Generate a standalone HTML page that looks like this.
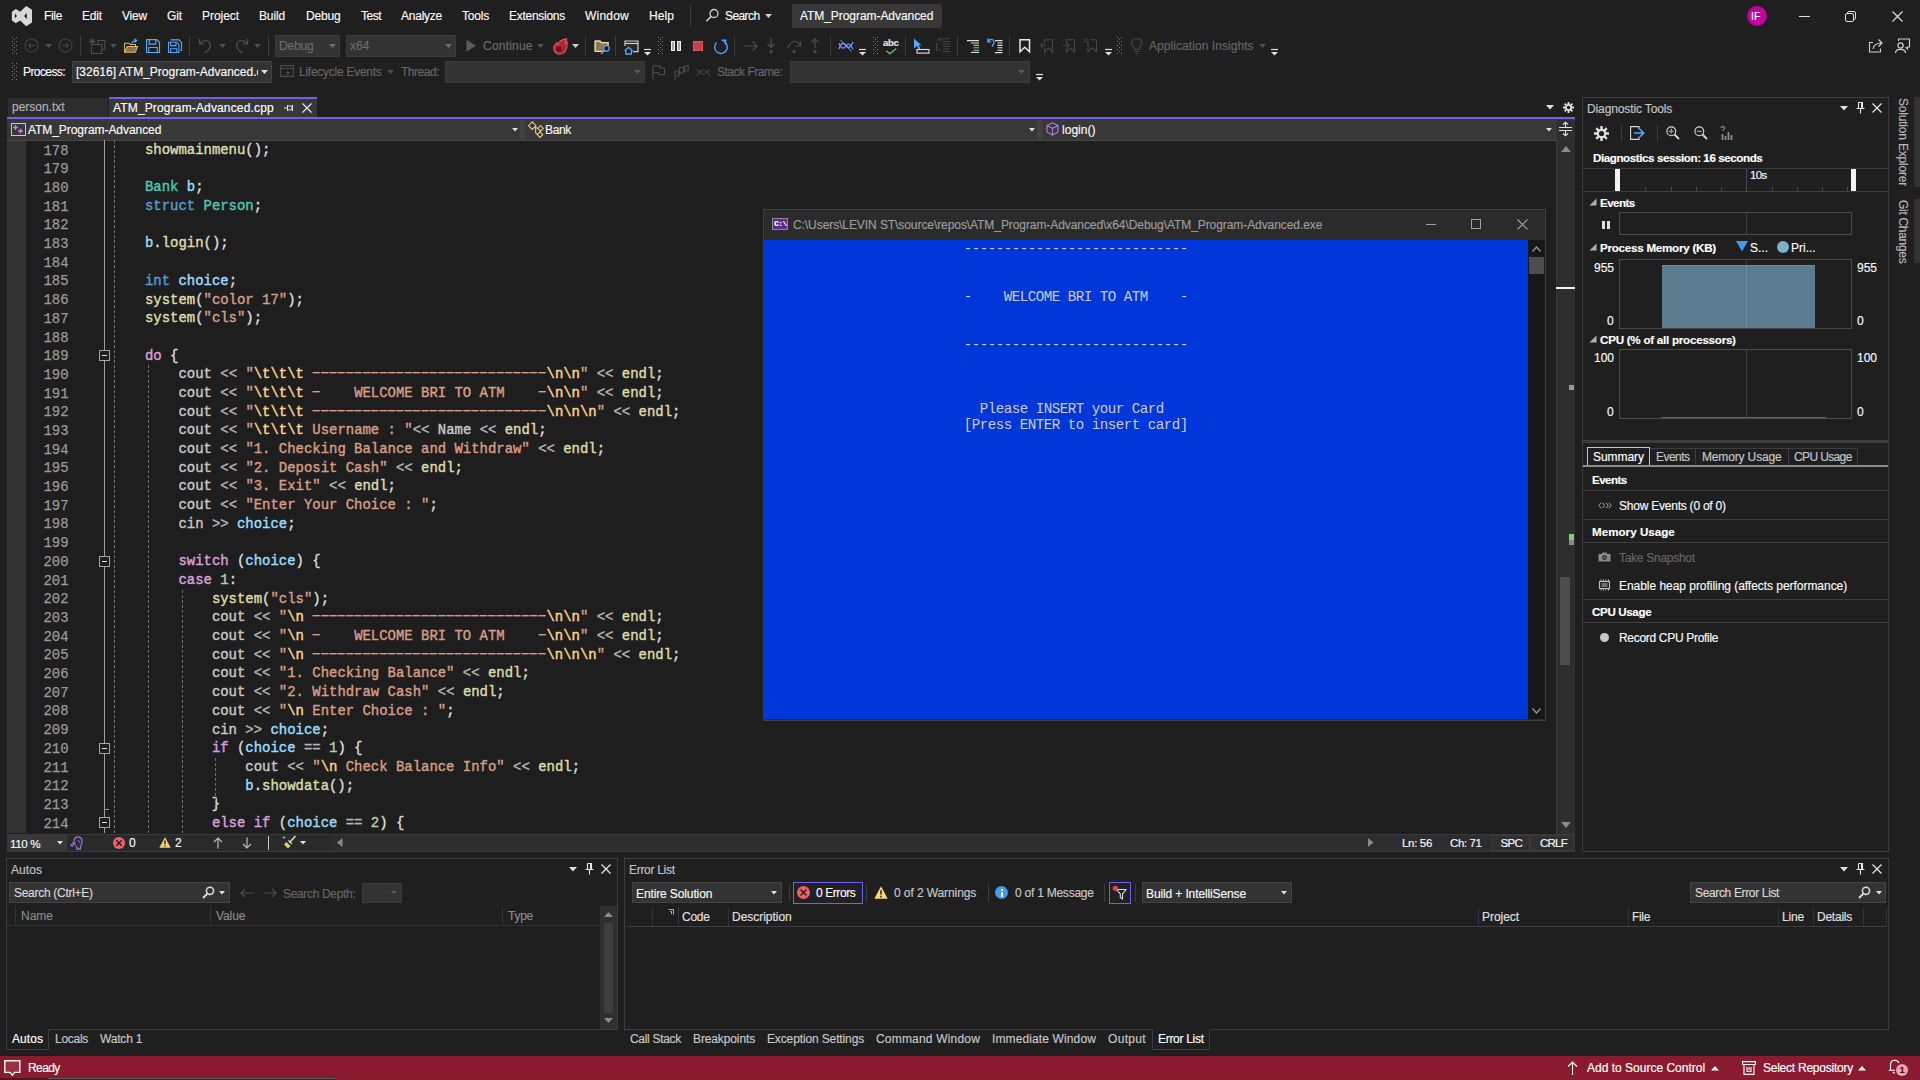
<!DOCTYPE html>
<html lang="en">
<head>
<meta charset="utf-8">
<title>ATM_Program-Advanced - Microsoft Visual Studio</title>
<style>
*{box-sizing:border-box;margin:0;padding:0}
html,body{width:1920px;height:1080px;overflow:hidden;background:#1f1f1f}
body{position:relative;font-family:"Liberation Sans",sans-serif;font-size:12px;color:#fafafa;-webkit-font-smoothing:antialiased}
.a{position:absolute;white-space:nowrap}
.t{position:absolute;white-space:nowrap;line-height:16px;height:16px}
.t{-webkit-text-stroke:0.15px}
.dim{color:#6d6d6d}
.mono{font-family:"Liberation Mono",monospace}
svg{position:absolute;overflow:visible}
/* code */
.ln{position:absolute;left:29px;width:39.5px;text-align:right;color:#9a9a9a;font-family:"Liberation Mono",monospace;font-size:13.95px;height:18.7px;line-height:18.7px;letter-spacing:0px}
.cl{position:absolute;left:111.5px;color:#dcdcdc;font-family:"Liberation Mono",monospace;font-size:13.95px;height:18.7px;line-height:18.7px;white-space:pre}
.d{display:inline-block;letter-spacing:-3.965px;transform:translate(-3.73px,-0.6px) scaleX(1.9);transform-origin:0 50%;-webkit-text-stroke:0.1px}
.cl{-webkit-text-stroke:0.4px}.ln{-webkit-text-stroke:0.25px}
.k{color:#569cd6}.c{color:#d8a0df}.ty{color:#4ec9b0}.v{color:#9cdcfe}.s{color:#d69d85}.e{color:#ffd68f}.f{color:#dcdcaa}.g{color:#c8c8c8}.o{color:#b4b4b4}.n{color:#b5cea8}
</style>
</head>
<body>
<!-- ===== title / menu bar ===== -->
<div class="a" id="menubar" style="left:0;top:0;width:1920px;height:32px;background:#1f1f1f"></div>
<svg style="left:11px;top:5px" width="22" height="22" viewBox="0 0 22 22"><path d="M0.85 6.85 L4.85 4 L9.1 6.7 L15.2 1.1 L21 4.8 V17.5 L15.2 21.2 L9.1 15.4 L4.85 18.3 L0.85 15.4 Z M3.85 8.6 L6 11.1 L3.85 13.2 Z M15.8 8 V14.3 L13.1 11.1 Z" fill="#d8d8d8" fill-rule="evenodd"/></svg>
<div class="t" style="left:44px;top:8px;letter-spacing:-0.34px">File</div>
<div class="t" style="left:82px;top:8px;letter-spacing:-0.22px">Edit</div>
<div class="t" style="left:122px;top:8px;letter-spacing:-0.20px">View</div>
<div class="t" style="left:167px;top:8px;letter-spacing:-0.18px">Git</div>
<div class="t" style="left:202px;top:8px;letter-spacing:-0.05px">Project</div>
<div class="t" style="left:259px;top:8px;letter-spacing:-0.14px">Build</div>
<div class="t" style="left:306px;top:8px;letter-spacing:-0.17px">Debug</div>
<div class="t" style="left:361px;top:8px;letter-spacing:-0.50px">Test</div>
<div class="t" style="left:401px;top:8px;letter-spacing:-0.24px">Analyze</div>
<div class="t" style="left:462px;top:8px;letter-spacing:-0.20px">Tools</div>
<div class="t" style="left:509px;top:8px;letter-spacing:-0.27px">Extensions</div>
<div class="t" style="left:585px;top:8px;letter-spacing:0.22px">Window</div>
<div class="t" style="left:649px;top:8px;letter-spacing:0.08px">Help</div>
<div class="a" style="left:690px;top:5px;width:1px;height:21px;background:#3d3d3d"></div>
<svg style="left:705px;top:8px" width="15" height="15" viewBox="0 0 15 15"><circle cx="9" cy="5.5" r="4" fill="none" stroke="#d0d0d0" stroke-width="1.3"/><path d="M6.2 8.4 L1.3 13.3" stroke="#d0d0d0" stroke-width="1.5"/></svg>
<div class="t" style="left:725px;top:8px;letter-spacing:-0.59px">Search</div>
<svg style="left:765px;top:14px" width="8" height="5" viewBox="0 0 8 5"><path d="M0 0 H7 L3.5 4 Z" fill="#d0d0d0"/></svg>
<div class="a" style="left:792px;top:4px;width:150px;height:24px;background:#383838;border-radius:2px"></div>
<div class="t" style="left:800px;top:8px;letter-spacing:-0.06px">ATM_Program-Advanced</div>
<div class="a" style="left:1747px;top:6px;width:20px;height:20px;border-radius:10px;background:#c3009f"></div>
<div class="t" style="left:1751px;top:8px;font-size:10.5px;color:#fff">IF</div>
<div class="a" style="left:1799px;top:16px;width:11px;height:1px;background:#e0e0e0"></div>
<svg style="left:1845px;top:11px" width="11" height="11" viewBox="0 0 11 11"><rect x="0.5" y="2.5" width="8" height="8" rx="1.5" fill="none" stroke="#e0e0e0"/><path d="M2.5 2.5 V2 Q2.5 0.5 4 0.5 H9 Q10.5 0.5 10.5 2 V7 Q10.5 8.5 9 8.5 H8.5" fill="none" stroke="#e0e0e0"/></svg>
<svg style="left:1892px;top:11px" width="11" height="11" viewBox="0 0 11 11"><path d="M0.5 0.5 L10.5 10.5 M10.5 0.5 L0.5 10.5" stroke="#e0e0e0" stroke-width="1.1"/></svg>
<!-- ===== toolbar row 1 ===== -->
<svg style="left:12px;top:37px" width="5" height="18" viewBox="0 0 5 18"><g fill="#808080"><rect x="0" y="0" width="1" height="1"/><rect x="4" y="0" width="1" height="1"/><rect x="2" y="2" width="1" height="1"/><rect x="0" y="4" width="1" height="1"/><rect x="4" y="4" width="1" height="1"/><rect x="2" y="6" width="1" height="1"/><rect x="0" y="8" width="1" height="1"/><rect x="4" y="8" width="1" height="1"/><rect x="2" y="10" width="1" height="1"/><rect x="0" y="12" width="1" height="1"/><rect x="4" y="12" width="1" height="1"/><rect x="2" y="14" width="1" height="1"/><rect x="0" y="16" width="1" height="1"/><rect x="4" y="16" width="1" height="1"/></g></svg>
<svg style="left:24px;top:38px" width="16" height="16" viewBox="0 0 16 16"><circle cx="7.5" cy="7.5" r="6.5" fill="none" stroke="#444444" stroke-width="1.1"/><path d="M11 7.5 H4.5 M7 5 L4.5 7.5 L7 10" fill="none" stroke="#444444" stroke-width="1.1"/></svg>
<svg style="left:45px;top:44px" width="8" height="5" viewBox="0 0 8 5"><path d="M0 0 H7 L3.5 4 Z" fill="#4f4f4f"/></svg>
<svg style="left:58px;top:38px" width="16" height="16" viewBox="0 0 16 16"><circle cx="7.5" cy="7.5" r="6.5" fill="none" stroke="#444444" stroke-width="1.1"/><path d="M4 7.5 H10.5 M8 5 L10.5 7.5 L8 10" fill="none" stroke="#444444" stroke-width="1.1"/></svg>
<div class="a" style="left:80px;top:36px;width:1px;height:20px;background:#3d3d3d"></div>
<svg style="left:88px;top:37px" width="18" height="18" viewBox="0 0 18 18"><path d="M10 7 V3.5 H16.8 V12.3 H14 M3.5 7.5 H13.8 V16.5 H3.5 Z" fill="none" stroke="#4d4d4d" stroke-width="1.1"/><path d="M4.3 1.2 V7.4 M1.2 4.3 H7.4 M2.1 2.1 L6.5 6.5 M6.5 2.1 L2.1 6.5" stroke="#5a5a5a" stroke-width="0.8"/></svg>
<svg style="left:110px;top:44px" width="8" height="5" viewBox="0 0 8 5"><path d="M0 0 H7 L3.5 4 Z" fill="#4f4f4f"/></svg>
<svg style="left:124px;top:38.6px" width="15.6" height="14.7" viewBox="0 0 17 16"><path d="M0.6 14.5 V4.5 H5.5 L7 6 H12.5 V8" fill="none" stroke="#dcb67a" stroke-width="1.1"/><path d="M0.8 14.5 L3.4 8.3 H14.8 L12.3 14.5 Z" fill="#dcb67a" fill-opacity=".55" stroke="#dcb67a" stroke-width="1.1"/><path d="M8.5 5 Q9 1.6 13.5 1.6 M11.5 -0.3 L13.8 1.7 L11.5 3.8" fill="none" stroke="#55aaff" stroke-width="1.3"/></svg>
<svg style="left:146.2px;top:39px" width="15" height="15" viewBox="0 0 16 16"><path d="M0.6 0.6 H11.5 L14.4 3.5 V14.4 H0.6 Z" fill="none" stroke="#55aaff" stroke-width="1.2"/><path d="M3.5 0.6 V5.5 H10.5 V0.6 M3 14.4 V9 H12 V14.4" fill="none" stroke="#55aaff" stroke-width="1.2"/></svg>
<svg style="left:168.2px;top:38.6px" width="15" height="15" viewBox="0 0 17 17"><path d="M0.6 3.6 H9.8 L12.4 6.2 V15.4 H0.6 Z" fill="none" stroke="#55aaff" stroke-width="1.2"/><path d="M3 3.6 V7.5 H9 V3.6 M3 15.4 V11 H10 V15.4" fill="none" stroke="#55aaff" stroke-width="1.2"/><path d="M3 1 H12.5 L15.4 4 V13 H14" fill="none" stroke="#55aaff" stroke-width="1.2"/></svg>
<div class="a" style="left:189px;top:36px;width:1px;height:20px;background:#3d3d3d"></div>
<svg style="left:198px;top:38px" width="16" height="16" viewBox="0 0 16 16"><path d="M1.5 1 V6 H6.5 M2 5.5 Q5 1.5 9.5 3 Q13.5 5 12 9.5 Q11 12 6.5 15" fill="none" stroke="#4f4f4f" stroke-width="1.2"/></svg>
<svg style="left:219px;top:44px" width="8" height="5" viewBox="0 0 8 5"><path d="M0 0 H7 L3.5 4 Z" fill="#4f4f4f"/></svg>
<svg style="left:233px;top:38px" width="16" height="16" viewBox="0 0 16 16"><path d="M14.5 1 V6 H9.5 M14 5.5 Q11 1.5 6.5 3 Q2.5 5 4 9.5 Q5 12 9.5 15" fill="none" stroke="#4f4f4f" stroke-width="1.2"/></svg>
<svg style="left:254px;top:44px" width="8" height="5" viewBox="0 0 8 5"><path d="M0 0 H7 L3.5 4 Z" fill="#4f4f4f"/></svg>
<div class="a" style="left:268px;top:36px;width:1px;height:20px;background:#3d3d3d"></div>
<div class="a" style="left:275px;top:35px;width:65px;height:22px;background:#333333;border:1px solid #3b3b3b"></div>
<div class="t dim" style="left:279px;top:38px;letter-spacing:-0.17px">Debug</div>
<svg style="left:329px;top:44px" width="8" height="5" viewBox="0 0 8 5"><path d="M0 0 H7 L3.5 4 Z" fill="#6d6d6d"/></svg>
<div class="a" style="left:346px;top:35px;width:110px;height:22px;background:#333333;border:1px solid #3b3b3b"></div>
<div class="t dim" style="left:350px;top:38px">x64</div>
<svg style="left:445px;top:44px" width="8" height="5" viewBox="0 0 8 5"><path d="M0 0 H7 L3.5 4 Z" fill="#6d6d6d"/></svg>
<svg style="left:466px;top:39px" width="11" height="14" viewBox="0 0 11 14"><path d="M0.5 0.8 L10 6.8 L0.5 12.8 Z" fill="#5a5a5a"/></svg>
<div class="t dim" style="left:483px;top:38px;letter-spacing:0.21px">Continue</div>
<svg style="left:537px;top:44px" width="8" height="5" viewBox="0 0 8 5"><path d="M0 0 H7 L3.5 4 Z" fill="#4f4f4f"/></svg>
<svg style="left:552.5px;top:37.5px" width="15" height="17" viewBox="0 0 15 17"><path d="M13.6 0.6 Q13.8 3.2 12 5 Q13.8 4.8 14.2 4.2 Q14.6 8 13.2 11.4 Q11.4 16.2 6.8 16.2 Q1.6 16 0.8 11.2 Q0.4 7 4.2 4.6 Q4.2 6 5.2 6.6 Q6.4 2 13.6 0.6 Z" fill="#a82a36" stroke="#e8525e" stroke-width="1.1"/><circle cx="6" cy="11" r="2.6" fill="#5c141d"/></svg>
<svg style="left:572px;top:44px" width="8" height="5" viewBox="0 0 8 5"><path d="M0 0 H7 L3.5 4 Z" fill="#d0d0d0"/></svg>
<div class="a" style="left:585px;top:36px;width:1px;height:20px;background:#3d3d3d"></div>
<svg style="left:593.5px;top:39.5px" width="17" height="16" viewBox="0 0 17 16"><path d="M1.2 11.4 V1.2 H6 L7.2 2.6 H14 V5.5 M1.2 11.4 H8.5" fill="#8a7a55" stroke="#f0d898" stroke-width="1.2"/><path d="M1.2 11.4 V1.2 H6 L7.2 2.6 H14 V11.4 Z" fill="#8a7a55" fill-opacity=".9" stroke="none"/><path d="M1.2 11.4 V1.2 H6 L7.2 2.6 H14 V5.5 M1.2 11.4 H8.5" fill="none" stroke="#f0d898" stroke-width="1.2"/><circle cx="12.4" cy="8.4" r="2.8" fill="#1f1f1f" stroke="#4da6ff" stroke-width="1.3"/><path d="M10.4 10.4 L7 14" stroke="#4da6ff" stroke-width="1.4"/></svg>
<div class="a" style="left:615px;top:36px;width:1px;height:20px;background:#3d3d3d"></div>
<svg style="left:623.5px;top:39.5px" width="16" height="16" viewBox="0 0 16 16"><path d="M1 6 V1 H14 V11.6 H9" fill="#2a2a2a" stroke="#d4d4d4" stroke-width="1.2"/><path d="M1 3.5 H14" stroke="#d4d4d4" stroke-width="1.2"/><path d="M0.6 10.8 L4.6 7.4 L8.6 10.8 M1.8 10 V14 H7.4 V10" fill="none" stroke="#4da6ff" stroke-width="1.3"/></svg>
<svg style="left:644px;top:49px" width="8" height="7" viewBox="0 0 8 7"><path d="M0 0.5 H7" stroke="#e0e0e0" stroke-width="1.2"/><path d="M0 3 H7 L3.5 6.5 Z" fill="#e0e0e0"/></svg>
<svg style="left:658px;top:37px" width="5" height="18" viewBox="0 0 5 18"><g fill="#808080"><rect x="0" y="0" width="1" height="1"/><rect x="4" y="0" width="1" height="1"/><rect x="2" y="2" width="1" height="1"/><rect x="0" y="4" width="1" height="1"/><rect x="4" y="4" width="1" height="1"/><rect x="2" y="6" width="1" height="1"/><rect x="0" y="8" width="1" height="1"/><rect x="4" y="8" width="1" height="1"/><rect x="2" y="10" width="1" height="1"/><rect x="0" y="12" width="1" height="1"/><rect x="4" y="12" width="1" height="1"/><rect x="2" y="14" width="1" height="1"/><rect x="0" y="16" width="1" height="1"/><rect x="4" y="16" width="1" height="1"/></g></svg>
<div class="a" style="left:670.9px;top:41px;width:3.9px;height:10px;background:#a8a8a8;border:0.8px solid #ececec"></div>
<div class="a" style="left:677.3px;top:41px;width:3.9px;height:10px;background:#a8a8a8;border:0.8px solid #ececec"></div>
<div class="a" style="left:693px;top:41px;width:10.2px;height:10px;background:#c93f4a;border:0.8px solid #e25560"></div>
<svg style="left:712.5px;top:38.5px" width="16" height="17" viewBox="0 0 16 17"><path d="M10.6 2.4 A6.3 6.3 0 1 1 3.6 3.6" fill="none" stroke="#4da6ff" stroke-width="1.4"/><path d="M8.6 1.2 H12.6 V5.4" fill="none" stroke="#4da6ff" stroke-width="1.4"/></svg>
<div class="a" style="left:734px;top:36px;width:1px;height:20px;background:#3d3d3d"></div>
<svg style="left:744px;top:40px" width="14" height="12" viewBox="0 0 14 12"><path d="M0 6 H13 M8.5 1.5 L13 6 L8.5 10.5" fill="none" stroke="#4f4f4f" stroke-width="1.2"/></svg>
<svg style="left:766px;top:38px" width="10" height="16" viewBox="0 0 10 16"><path d="M5 0 V9.5 M1.5 6 L5 9.5 L8.5 6" fill="none" stroke="#4f4f4f" stroke-width="1.2"/><circle cx="5" cy="13.5" r="1.6" fill="#4f4f4f"/></svg>
<svg style="left:787px;top:40px" width="15" height="14" viewBox="0 0 15 14"><path d="M1 8 Q3 1.5 8 1.5 Q11.5 1.5 13 5.5 M13.5 1 V6 H8.5" fill="none" stroke="#4f4f4f" stroke-width="1.2"/><circle cx="7" cy="11.5" r="1.6" fill="#4f4f4f"/></svg>
<svg style="left:810px;top:38px" width="10" height="16" viewBox="0 0 10 16"><path d="M5 10 V0.8 M1.5 4.3 L5 0.8 L8.5 4.3" fill="none" stroke="#4f4f4f" stroke-width="1.2"/><circle cx="5" cy="13.5" r="1.6" fill="#4f4f4f"/></svg>
<div class="a" style="left:830px;top:36px;width:1px;height:20px;background:#3d3d3d"></div>
<svg style="left:838px;top:38px" width="16" height="16" viewBox="0 0 16 16"><path d="M1 11 Q4 2 8 7.5 Q11.5 12.5 15 4" fill="none" stroke="#55aaff" stroke-width="1.3"/><path d="M1 5 Q4 13.5 8 8 Q11.5 3 15 11.5" fill="none" stroke="#a074e0" stroke-width="1.3"/><path d="M2.5 2 L13.5 13.5" stroke="#55aaff" stroke-width="1"/></svg>
<svg style="left:859px;top:49px" width="8" height="7" viewBox="0 0 8 7"><path d="M0 0.5 H7" stroke="#e0e0e0" stroke-width="1.2"/><path d="M0 3 H7 L3.5 6.5 Z" fill="#e0e0e0"/></svg>
<svg style="left:873px;top:37px" width="5" height="18" viewBox="0 0 5 18"><g fill="#808080"><rect x="0" y="0" width="1" height="1"/><rect x="4" y="0" width="1" height="1"/><rect x="2" y="2" width="1" height="1"/><rect x="0" y="4" width="1" height="1"/><rect x="4" y="4" width="1" height="1"/><rect x="2" y="6" width="1" height="1"/><rect x="0" y="8" width="1" height="1"/><rect x="4" y="8" width="1" height="1"/><rect x="2" y="10" width="1" height="1"/><rect x="0" y="12" width="1" height="1"/><rect x="4" y="12" width="1" height="1"/><rect x="2" y="14" width="1" height="1"/><rect x="0" y="16" width="1" height="1"/><rect x="4" y="16" width="1" height="1"/></g></svg>
<div class="t" style="left:883px;top:35px;font-size:9.5px;font-weight:bold;color:#e6e6e6;letter-spacing:-0.3px">abc</div>
<svg style="left:886px;top:48px" width="11" height="7" viewBox="0 0 11 7"><path d="M0.5 2.8 L3.8 5.8 L10.3 0.5" fill="none" stroke="#4fc266" stroke-width="1.4"/></svg>
<div class="a" style="left:905px;top:36px;width:1px;height:20px;background:#3d3d3d"></div>
<svg style="left:913px;top:38px" width="17" height="17" viewBox="0 0 17 17"><path d="M1 0.5 V10.5 L3.8 8 L6 11.5 L7.5 10.5 L5.5 7.3 H8.5 Z" fill="#55aaff"/><rect x="4" y="11.5" width="12" height="3.6" fill="none" stroke="#e0e0e0" stroke-width="1.1"/></svg>
<svg style="left:936px;top:38px" width="15" height="16" viewBox="0 0 15 16"><path d="M0.6 5 V12 H4.5 M3 2 V0.8 H14 M7 3.5 H14 M7 6 H14 M7 8.5 H14 M7 11 H14 M7 13.5 H14" fill="none" stroke="#444444" stroke-width="1.1"/><path d="M1.5 3 L3.3 1 L5 3" fill="none" stroke="#4b4b4b"/></svg>
<div class="a" style="left:957px;top:36px;width:1px;height:20px;background:#3d3d3d"></div>
<svg style="left:967px;top:40px" width="13" height="13" viewBox="0 0 13 13"><path d="M0 0.6 H12 M4 3 H12" stroke="#e0e0e0" stroke-width="1.1"/><path d="M6.5 5.4 H12 M6.5 7.8 H12 M6.5 10.2 H12" stroke="#6ad27a" stroke-width="1.1"/><path d="M4 12.4 H12" stroke="#e0e0e0" stroke-width="1.1"/></svg>
<svg style="left:987px;top:38px" width="16" height="15" viewBox="0 0 16 15"><path d="M8 2.6 H15.5 M10.5 5 H15.5 M10.5 7.4 H15.5 M10.5 9.8 H15.5 M10.5 12.2 H15.5 M8 14.6 H15.5" stroke="#e0e0e0" stroke-width="1.1"/><path d="M0.8 0.3 V4 H4.3 M1 3.6 Q3.5 0 6.3 2.2 Q8.3 4.5 5 8.5" fill="none" stroke="#55aaff" stroke-width="1.2"/></svg>
<div class="a" style="left:1009px;top:36px;width:1px;height:20px;background:#3d3d3d"></div>
<svg style="left:1019px;top:39px" width="12" height="14" viewBox="0 0 12 14"><path d="M1 0.8 H10.5 V12.8 L5.75 8.3 L1 12.8 Z" fill="none" stroke="#eaeaea" stroke-width="1.5"/></svg>
<svg style="left:1040px;top:39px" width="14" height="14" viewBox="0 0 14 14"><path d="M4.5 0.8 H12.5 V12.8 L8.5 8.8 L4.5 12.8 V8.5 M4.5 4 V0.8 M6.5 6.3 H0.8 M3 4 L0.8 6.3 L3 8.6" fill="none" stroke="#474747" stroke-width="1.1"/></svg>
<svg style="left:1062px;top:39px" width="14" height="14" viewBox="0 0 14 14"><path d="M4.5 0.8 H12.5 V12.8 L8.5 8.8 L4.5 12.8 V8.5 M4.5 4 V0.8 M0.5 6.3 H7 M4.8 4 L7 6.3 L4.8 8.6" fill="none" stroke="#474747" stroke-width="1.1"/></svg>
<svg style="left:1083px;top:38px" width="15" height="15" viewBox="0 0 15 15"><path d="M5 3 V13.8 L9.3 9.8 L13.5 13.8 V1.8 H7" fill="none" stroke="#474747" stroke-width="1.1"/><path d="M0.5 0.5 L4.5 4.5 M4.5 0.5 L0.5 4.5" stroke="#474747" stroke-width="1"/></svg>
<svg style="left:1105px;top:49px" width="8" height="7" viewBox="0 0 8 7"><path d="M0 0.5 H7" stroke="#e0e0e0" stroke-width="1.2"/><path d="M0 3 H7 L3.5 6.5 Z" fill="#e0e0e0"/></svg>
<svg style="left:1117px;top:37px" width="5" height="18" viewBox="0 0 5 18"><g fill="#808080"><rect x="0" y="0" width="1" height="1"/><rect x="4" y="0" width="1" height="1"/><rect x="2" y="2" width="1" height="1"/><rect x="0" y="4" width="1" height="1"/><rect x="4" y="4" width="1" height="1"/><rect x="2" y="6" width="1" height="1"/><rect x="0" y="8" width="1" height="1"/><rect x="4" y="8" width="1" height="1"/><rect x="2" y="10" width="1" height="1"/><rect x="0" y="12" width="1" height="1"/><rect x="4" y="12" width="1" height="1"/><rect x="2" y="14" width="1" height="1"/><rect x="0" y="16" width="1" height="1"/><rect x="4" y="16" width="1" height="1"/></g></svg>
<svg style="left:1131px;top:38px" width="12" height="17" viewBox="0 0 12 17"><path d="M3.5 11.5 Q3.5 9.5 2 8 Q0.6 6.5 0.6 5.2 Q0.8 0.7 5.8 0.7 Q10.8 0.7 11 5.2 Q11 6.5 9.6 8 Q8 9.5 8 11.5 Z M3.8 13.5 H7.8 M4.3 15.5 H7.3" fill="none" stroke="#464646" stroke-width="1.1"/></svg>
<div class="t dim" style="left:1149px;top:38px;color:#666;letter-spacing:0.06px">Application Insights</div>
<svg style="left:1259px;top:44px" width="8" height="5" viewBox="0 0 8 5"><path d="M0 0 H7 L3.5 4 Z" fill="#4f4f4f"/></svg>
<svg style="left:1271px;top:49px" width="8" height="7" viewBox="0 0 8 7"><path d="M0 0.5 H7" stroke="#e0e0e0" stroke-width="1.2"/><path d="M0 3 H7 L3.5 6.5 Z" fill="#e0e0e0"/></svg>
<svg style="left:1868px;top:38px" width="16" height="16" viewBox="0 0 16 16"><path d="M5 4.5 H1.5 V14 H12.5 V10.5" fill="none" stroke="#d0d0d0" stroke-width="1.1"/><path d="M5 11 Q6 5 13.5 5 M10.5 1.5 L14 5 L10.5 8.5" fill="none" stroke="#d0d0d0" stroke-width="1.2"/></svg>
<svg style="left:1894px;top:38px" width="17" height="16" viewBox="0 0 17 16"><path d="M4.5 3 V1 H15.5 V9 H13.5 V11 L11.5 9.2" fill="none" stroke="#d0d0d0" stroke-width="1.1"/><circle cx="6.5" cy="7.5" r="2.6" fill="none" stroke="#d0d0d0" stroke-width="1.2"/><path d="M1.5 15 Q1.5 11.3 6.5 11.3 Q11.5 11.3 11.5 15" fill="none" stroke="#d0d0d0" stroke-width="1.2"/></svg>
<!-- ===== toolbar row 2 ===== -->
<svg style="left:12px;top:63px" width="5" height="18" viewBox="0 0 5 18"><g fill="#808080"><rect x="0" y="0" width="1" height="1"/><rect x="4" y="0" width="1" height="1"/><rect x="2" y="2" width="1" height="1"/><rect x="0" y="4" width="1" height="1"/><rect x="4" y="4" width="1" height="1"/><rect x="2" y="6" width="1" height="1"/><rect x="0" y="8" width="1" height="1"/><rect x="4" y="8" width="1" height="1"/><rect x="2" y="10" width="1" height="1"/><rect x="0" y="12" width="1" height="1"/><rect x="4" y="12" width="1" height="1"/><rect x="2" y="14" width="1" height="1"/><rect x="0" y="16" width="1" height="1"/><rect x="4" y="16" width="1" height="1"/></g></svg>
<div class="t" style="left:23px;top:64px;letter-spacing:-0.59px">Process:</div>
<div class="a" style="left:72px;top:61px;width:200px;height:22px;background:#333333;border:1px solid #434343"></div>
<div class="t" style="left:76px;top:64px;width:182px;overflow:hidden">[32616] ATM_Program-Advanced.exe</div>
<svg style="left:261px;top:70px" width="8" height="5" viewBox="0 0 8 5"><path d="M0 0 H7 L3.5 4 Z" fill="#e0e0e0"/></svg>
<svg style="left:280px;top:65px" width="14" height="14" viewBox="0 0 14 14"><path d="M0.6 0.6 H13.4 V11.4 H0.6 Z M0.6 3.5 H13.4" fill="none" stroke="#4b4b4b" stroke-width="1.1"/><path d="M8.5 4.5 L5.5 8.3 H8 L6 12 L10.3 7 H7.8 Z" fill="#4b4b4b"/></svg>
<div class="t dim" style="left:299px;top:64px;color:#666;letter-spacing:-0.26px">Lifecycle Events</div>
<svg style="left:387px;top:70px" width="8" height="5" viewBox="0 0 8 5"><path d="M0 0 H7 L3.5 4 Z" fill="#4f4f4f"/></svg>
<div class="t dim" style="left:401px;top:64px;color:#666;letter-spacing:-0.48px">Thread:</div>
<div class="a" style="left:445px;top:61px;width:200px;height:22px;background:#333333;border:1px solid #3b3b3b"></div>
<svg style="left:634px;top:70px" width="8" height="5" viewBox="0 0 8 5"><path d="M0 0 H7 L3.5 4 Z" fill="#5a5a5a"/></svg>
<svg style="left:652px;top:65px" width="14" height="15" viewBox="0 0 14 15"><path d="M1 14.5 V0.8 H8 V3 H12.5 V9.5 H6.5 V7.5 H1" fill="none" stroke="#4b4b4b" stroke-width="1.2"/></svg>
<svg style="left:674px;top:65px" width="15" height="16" viewBox="0 0 15 16"><path d="M1 15.5 V6 H5 V11 H1 M5.5 10 V2.5 H9.5 V8 H6 M10.5 7 V0.8 H14.2 V6 H10.5" fill="none" stroke="#4b4b4b" stroke-width="1.2"/></svg>
<svg style="left:696px;top:67px" width="15" height="11" viewBox="0 0 15 11"><path d="M1 9 Q7.5 -3 14 9 M1 2 Q7.5 12 14 2" fill="none" stroke="#454545" stroke-width="1.1"/></svg>
<div class="t dim" style="left:717px;top:64px;color:#666;letter-spacing:-0.49px">Stack Frame:</div>
<div class="a" style="left:790px;top:61px;width:240px;height:22px;background:#333333;border:1px solid #3b3b3b"></div>
<svg style="left:1018px;top:70px" width="8" height="5" viewBox="0 0 8 5"><path d="M0 0 H7 L3.5 4 Z" fill="#5a5a5a"/></svg>
<svg style="left:1036px;top:74px" width="8" height="7" viewBox="0 0 8 7"><path d="M0 0.5 H7" stroke="#e0e0e0" stroke-width="1.2"/><path d="M0 3 H7 L3.5 6.5 Z" fill="#e0e0e0"/></svg>
<!-- ===== document tabs + nav bar ===== -->
<div class="a" style="left:8px;top:98px;width:100px;height:20px;background:#2d2d2d"></div>
<div class="t" style="left:12px;top:99px;color:#b4b4b4;letter-spacing:-0.02px">person.txt</div>
<div class="a" style="left:109px;top:97px;width:208px;height:22px;background:#383838;border-top:2px solid #7160e8"></div>
<div class="t" style="left:113px;top:100px;color:#fff;letter-spacing:0.15px">ATM_Program-Advanced.cpp</div>
<svg style="left:284px;top:104px" width="9" height="8" viewBox="0 0 9 8"><path d="M0 4 H3.5 M3.5 1 V7 M3.5 2 H8 V5.8 H3.5 M8.5 1 V7" fill="none" stroke="#e0e0e0" stroke-width="1"/></svg>
<svg style="left:302px;top:103px" width="10" height="10" viewBox="0 0 10 10"><path d="M0.5 0.5 L9.5 9.5 M9.5 0.5 L0.5 9.5" stroke="#e6e6e6" stroke-width="1.2"/></svg>
<div class="a" style="left:7px;top:117px;width:1568px;height:2px;background:#7160e8"></div>
<svg style="left:1546px;top:105px" width="8" height="5" viewBox="0 0 8 5"><path d="M0 0 H8 L4 4.5 Z" fill="#e0e0e0"/></svg>
<svg style="left:1563px;top:102px" width="11" height="11" viewBox="0 0 11 11"><circle cx="5.5" cy="5.5" r="2.7" fill="none" stroke="#e0e0e0" stroke-width="1.8"/><path d="M5.5 0 V2.2 M5.5 8.8 V11 M0 5.5 H2.2 M8.8 5.5 H11 M1.6 1.6 L3.1 3.1 M7.9 7.9 L9.4 9.4 M9.4 1.6 L7.9 3.1 M3.1 7.9 L1.6 9.4" stroke="#e0e0e0" stroke-width="1.9"/></svg>
<!-- nav bar -->
<div class="a" style="left:7px;top:119px;width:1568px;height:22px;background:#383838"></div>
<div class="a" style="left:520px;top:120px;width:5px;height:20px;background:#424242"></div>
<div class="a" style="left:1037px;top:120px;width:5px;height:20px;background:#424242"></div><div class="a" style="left:7px;top:140px;width:1568px;height:1px;background:#484848"></div>
<div class="a" style="left:1557px;top:120px;width:18px;height:21px;background:#2e2e2e"></div>
<svg style="left:11px;top:123px" width="15" height="13" viewBox="0 0 15 13"><rect x="0.5" y="0.5" width="14" height="12" fill="none" stroke="#c8c8c8"/><path d="M4.5 2 V7 M2 4.5 H7 M9.5 5.5 V10.5 M7 8 H12" stroke="#c586e8" stroke-width="1.3"/></svg>
<div class="t" style="left:28px;top:122px;letter-spacing:-0.06px">ATM_Program-Advanced</div>
<svg style="left:512px;top:128px" width="7" height="4" viewBox="0 0 7 4"><path d="M0 0 H6 L3 3.5 Z" fill="#e0e0e0"/></svg>
<svg style="left:527px;top:121px" width="18" height="18" viewBox="0 0 18 18"><path d="M5.3 0.9 L9.1 4.7 L5.3 8.5 L1.5 4.7 Z M13.6 4.6 L16.4 7.4 L13.6 10.2 L10.8 7.4 Z M13 10.8 L15.8 13.6 L13 16.4 L10.2 13.6 Z" fill="none" stroke="#e8c97f" stroke-width="1.1"/><path d="M8 6 L11 7.4 M8.6 6.4 V12 L10.4 13.4" fill="none" stroke="#e8c97f" stroke-width="1.1"/></svg>
<div class="t" style="left:545px;top:122px;letter-spacing:-0.34px">Bank</div>
<svg style="left:1029px;top:128px" width="7" height="4" viewBox="0 0 7 4"><path d="M0 0 H6 L3 3.5 Z" fill="#e0e0e0"/></svg>
<svg style="left:1046px;top:122px" width="13" height="14" viewBox="0 0 13 14"><path d="M6.5 0.8 L12 3.5 V10 L6.5 13 L1 10 V3.5 Z M1 3.5 L6.5 6.3 L12 3.5 M6.5 6.3 V13" fill="none" stroke="#b180d7" stroke-width="1.1"/></svg>
<div class="t" style="left:1062px;top:122px;letter-spacing:0.02px">login()</div>
<svg style="left:1546px;top:128px" width="7" height="4" viewBox="0 0 7 4"><path d="M0 0 H6 L3 3.5 Z" fill="#e0e0e0"/></svg>
<svg style="left:1559px;top:122px" width="13" height="14" viewBox="0 0 13 14"><path d="M0 5.5 H13 M0 8.5 H13 M6.5 0 V5 M6.5 9 V14 M4 2.5 L6.5 0.3 L9 2.5 M4 11.5 L6.5 13.7 L9 11.5" fill="none" stroke="#e0e0e0" stroke-width="1.1"/></svg>
<!-- ===== code editor ===== -->
<div class="a" id="editor" style="left:7px;top:141px;width:1550px;height:692px;background:#1e1e1e;overflow:hidden"></div>
<div class="a" style="left:6.5px;top:141px;width:19px;height:692px;background:#333333"></div>
<div class="ln" style="top:141.60px">178</div><div class="cl" style="top:141.00px">    <span class="f">showmainmenu</span>();</div>
<div class="ln" style="top:160.29px">179</div><div class="cl" style="top:159.69px"></div>
<div class="ln" style="top:178.99px">180</div><div class="cl" style="top:178.39px">    <span class="ty">Bank</span> <span class="v">b</span>;</div>
<div class="ln" style="top:197.68px">181</div><div class="cl" style="top:197.08px">    <span class="k">struct</span> <span class="ty">Person</span>;</div>
<div class="ln" style="top:216.38px">182</div><div class="cl" style="top:215.78px"></div>
<div class="ln" style="top:235.07px">183</div><div class="cl" style="top:234.47px">    <span class="v">b</span>.<span class="f">login</span>();</div>
<div class="ln" style="top:253.76px">184</div><div class="cl" style="top:253.16px"></div>
<div class="ln" style="top:272.46px">185</div><div class="cl" style="top:271.86px">    <span class="k">int</span> <span class="v">choice</span>;</div>
<div class="ln" style="top:291.15px">186</div><div class="cl" style="top:290.55px">    <span class="f">system</span>(<span class="s">"color 17"</span>);</div>
<div class="ln" style="top:309.85px">187</div><div class="cl" style="top:309.25px">    <span class="f">system</span>(<span class="s">"cls"</span>);</div>
<div class="ln" style="top:328.54px">188</div><div class="cl" style="top:327.94px"></div>
<div class="ln" style="top:347.23px">189</div><div class="cl" style="top:346.63px">    <span class="c">do</span> {</div>
<div class="ln" style="top:365.93px">190</div><div class="cl" style="top:365.33px">        <span class="g">cout</span> <span class="o">&lt;&lt;</span> <span class="s">"</span><span class="e">\t</span><span class="e">\t</span><span class="e">\t</span><span class="s"> <span class="d" style="margin-right:111.02px">----------------------------</span></span><span class="e">\n</span><span class="e">\n</span><span class="s">"</span> <span class="o">&lt;&lt;</span> <span class="f">endl</span>;</div>
<div class="ln" style="top:384.62px">191</div><div class="cl" style="top:384.02px">        <span class="g">cout</span> <span class="o">&lt;&lt;</span> <span class="s">"</span><span class="e">\t</span><span class="e">\t</span><span class="e">\t</span><span class="s"> <span class="d" style="margin-right:3.96px">-</span>    WELCOME BRI TO ATM    <span class="d" style="margin-right:3.96px">-</span></span><span class="e">\n</span><span class="e">\n</span><span class="s">"</span> <span class="o">&lt;&lt;</span> <span class="f">endl</span>;</div>
<div class="ln" style="top:403.32px">192</div><div class="cl" style="top:402.72px">        <span class="g">cout</span> <span class="o">&lt;&lt;</span> <span class="s">"</span><span class="e">\t</span><span class="e">\t</span><span class="e">\t</span><span class="s"> <span class="d" style="margin-right:111.02px">----------------------------</span></span><span class="e">\n</span><span class="e">\n</span><span class="e">\n</span><span class="s">"</span> <span class="o">&lt;&lt;</span> <span class="f">endl</span>;</div>
<div class="ln" style="top:422.01px">193</div><div class="cl" style="top:421.41px">        <span class="g">cout</span> <span class="o">&lt;&lt;</span> <span class="s">"</span><span class="e">\t</span><span class="e">\t</span><span class="e">\t</span><span class="s"> Username : "</span><span class="o">&lt;&lt;</span> <span class="g">Name</span> <span class="o">&lt;&lt;</span> <span class="f">endl</span>;</div>
<div class="ln" style="top:440.70px">194</div><div class="cl" style="top:440.10px">        <span class="g">cout</span> <span class="o">&lt;&lt;</span> <span class="s">"1. Checking Balance and Withdraw"</span> <span class="o">&lt;&lt;</span> <span class="f">endl</span>;</div>
<div class="ln" style="top:459.40px">195</div><div class="cl" style="top:458.80px">        <span class="g">cout</span> <span class="o">&lt;&lt;</span> <span class="s">"2. Deposit Cash"</span> <span class="o">&lt;&lt;</span> <span class="f">endl</span>;</div>
<div class="ln" style="top:478.09px">196</div><div class="cl" style="top:477.49px">        <span class="g">cout</span> <span class="o">&lt;&lt;</span> <span class="s">"3. Exit"</span> <span class="o">&lt;&lt;</span> <span class="f">endl</span>;</div>
<div class="ln" style="top:496.79px">197</div><div class="cl" style="top:496.19px">        <span class="g">cout</span> <span class="o">&lt;&lt;</span> <span class="s">"Enter Your Choice : "</span>;</div>
<div class="ln" style="top:515.48px">198</div><div class="cl" style="top:514.88px">        <span class="g">cin</span> <span class="o">&gt;&gt;</span> <span class="v">choice</span>;</div>
<div class="ln" style="top:534.17px">199</div><div class="cl" style="top:533.57px"></div>
<div class="ln" style="top:552.87px">200</div><div class="cl" style="top:552.27px">        <span class="c">switch</span> (<span class="v">choice</span>) {</div>
<div class="ln" style="top:571.56px">201</div><div class="cl" style="top:570.96px">        <span class="c">case</span> <span class="n">1</span>:</div>
<div class="ln" style="top:590.26px">202</div><div class="cl" style="top:589.66px">            <span class="f">system</span>(<span class="s">"cls"</span>);</div>
<div class="ln" style="top:608.95px">203</div><div class="cl" style="top:608.35px">            <span class="g">cout</span> <span class="o">&lt;&lt;</span> <span class="s">"</span><span class="e">\n</span><span class="s"> <span class="d" style="margin-right:111.02px">----------------------------</span></span><span class="e">\n</span><span class="e">\n</span><span class="s">"</span> <span class="o">&lt;&lt;</span> <span class="f">endl</span>;</div>
<div class="ln" style="top:627.64px">204</div><div class="cl" style="top:627.04px">            <span class="g">cout</span> <span class="o">&lt;&lt;</span> <span class="s">"</span><span class="e">\n</span><span class="s"> <span class="d" style="margin-right:3.96px">-</span>    WELCOME BRI TO ATM    <span class="d" style="margin-right:3.96px">-</span></span><span class="e">\n</span><span class="e">\n</span><span class="s">"</span> <span class="o">&lt;&lt;</span> <span class="f">endl</span>;</div>
<div class="ln" style="top:646.34px">205</div><div class="cl" style="top:645.74px">            <span class="g">cout</span> <span class="o">&lt;&lt;</span> <span class="s">"</span><span class="e">\n</span><span class="s"> <span class="d" style="margin-right:111.02px">----------------------------</span></span><span class="e">\n</span><span class="e">\n</span><span class="e">\n</span><span class="s">"</span> <span class="o">&lt;&lt;</span> <span class="f">endl</span>;</div>
<div class="ln" style="top:665.03px">206</div><div class="cl" style="top:664.43px">            <span class="g">cout</span> <span class="o">&lt;&lt;</span> <span class="s">"1. Checking Balance"</span> <span class="o">&lt;&lt;</span> <span class="f">endl</span>;</div>
<div class="ln" style="top:683.73px">207</div><div class="cl" style="top:683.13px">            <span class="g">cout</span> <span class="o">&lt;&lt;</span> <span class="s">"2. Withdraw Cash"</span> <span class="o">&lt;&lt;</span> <span class="f">endl</span>;</div>
<div class="ln" style="top:702.42px">208</div><div class="cl" style="top:701.82px">            <span class="g">cout</span> <span class="o">&lt;&lt;</span> <span class="s">"</span><span class="e">\n</span><span class="s"> Enter Choice : "</span>;</div>
<div class="ln" style="top:721.11px">209</div><div class="cl" style="top:720.51px">            <span class="g">cin</span> <span class="o">&gt;&gt;</span> <span class="v">choice</span>;</div>
<div class="ln" style="top:739.81px">210</div><div class="cl" style="top:739.21px">            <span class="c">if</span> (<span class="v">choice</span> <span class="o">==</span> <span class="n">1</span>) {</div>
<div class="ln" style="top:758.50px">211</div><div class="cl" style="top:757.90px">                <span class="g">cout</span> <span class="o">&lt;&lt;</span> <span class="s">"</span><span class="e">\n</span><span class="s"> Check Balance Info"</span> <span class="o">&lt;&lt;</span> <span class="f">endl</span>;</div>
<div class="ln" style="top:777.20px">212</div><div class="cl" style="top:776.60px">                <span class="v">b</span>.<span class="f">showdata</span>();</div>
<div class="ln" style="top:795.89px">213</div><div class="cl" style="top:795.29px">            }</div>
<div class="ln" style="top:814.58px">214</div><div class="cl" style="top:813.98px">            <span class="c">else</span> <span class="c">if</span> (<span class="v">choice</span> <span class="o">==</span> <span class="n">2</span>) {</div>
<div class="a" style="left:104px;top:140px;width:1px;height:693px;background:#9e9e9e"></div>
<div class="a" style="left:99px;top:350.0px;width:11px;height:11px;background:#1e1e1e;border:1px solid #a5a5a5"></div><div class="a" style="left:102px;top:355.0px;width:5px;height:1px;background:#e0e0e0"></div>
<div class="a" style="left:99px;top:555.6px;width:11px;height:11px;background:#1e1e1e;border:1px solid #a5a5a5"></div><div class="a" style="left:102px;top:560.6px;width:5px;height:1px;background:#e0e0e0"></div>
<div class="a" style="left:99px;top:742.6px;width:11px;height:11px;background:#1e1e1e;border:1px solid #a5a5a5"></div><div class="a" style="left:102px;top:747.6px;width:5px;height:1px;background:#e0e0e0"></div>
<div class="a" style="left:99px;top:817.3px;width:11px;height:11px;background:#1e1e1e;border:1px solid #a5a5a5"></div><div class="a" style="left:102px;top:822.3px;width:5px;height:1px;background:#e0e0e0"></div>
<div class="a" style="left:104px;top:809.0px;width:5px;height:1px;background:#9e9e9e"></div>
<div class="a" style="left:114.0px;top:140.0px;width:1px;height:693.0px;background:repeating-linear-gradient(to bottom,#6e6e6e 0,#6e6e6e 3px,transparent 3px,transparent 5px)"></div>
<div class="a" style="left:148.0px;top:365.3px;width:1px;height:467.7px;background:repeating-linear-gradient(to bottom,#6e6e6e 0,#6e6e6e 3px,transparent 3px,transparent 5px)"></div>
<div class="a" style="left:181.5px;top:589.7px;width:1px;height:243.3px;background:repeating-linear-gradient(to bottom,#6e6e6e 0,#6e6e6e 3px,transparent 3px,transparent 5px)"></div>
<div class="a" style="left:215.0px;top:757.9px;width:1px;height:47.4px;background:repeating-linear-gradient(to bottom,#6e6e6e 0,#6e6e6e 3px,transparent 3px,transparent 5px)"></div>
<!-- ===== editor scrollbar + bottom strip ===== -->
<div class="a" style="left:1556px;top:141px;width:19px;height:693px;background:#2e2e2e;border-left:1px solid #3a3a3a"></div>
<svg style="left:1561px;top:146px" width="10" height="6" viewBox="0 0 10 6"><path d="M0 6 H10 L5 0 Z" fill="#8a8a8a"/></svg>
<svg style="left:1561px;top:822px" width="10" height="6" viewBox="0 0 10 6"><path d="M0 0 H10 L5 6 Z" fill="#8a8a8a"/></svg>
<div class="a" style="left:1556px;top:287px;width:19px;height:2px;background:#f0f0f0"></div>
<div class="a" style="left:1569px;top:385px;width:5px;height:5px;background:#9a9a9a"></div>
<div class="a" style="left:1569px;top:534px;width:5px;height:6px;background:#7bd36b"></div>
<div class="a" style="left:1569px;top:540px;width:5px;height:5px;background:#8a8a8a"></div>
<div class="a" style="left:1560px;top:577px;width:10px;height:88px;background:#4d4d4d"></div>
<!-- bottom strip -->
<div class="a" style="left:7px;top:834px;width:1568px;height:18px;background:#2d2d2d;border-top:1px solid #3a3a3a;border-bottom:1px solid #3d3d3d"></div>
<div class="a" style="left:7px;top:835px;width:325px;height:16px;background:#2a2a2a"></div>
<div class="a" style="left:7px;top:835px;width:60px;height:16px;background:#383838"></div>
<div class="t" style="left:10px;top:835.5px;font-size:11.6px;letter-spacing:-0.35px">110 %</div>
<svg style="left:57px;top:841px" width="7" height="4" viewBox="0 0 7 4"><path d="M0 0 H6 L3 3.5 Z" fill="#e0e0e0"/></svg>
<svg style="left:70px;top:836px" width="13" height="14" viewBox="0 0 13 14"><path d="M4 5.5 Q4 1 8 1 Q12 1 12 5.5 Q12 8.5 10.5 10 V13 H7 V11" fill="none" stroke="#9b6fd8" stroke-width="1.3"/><path d="M7.5 4 Q9.5 4.5 9.5 6.5 M5.5 7 L2 10.5 Q0.5 9.5 1 8 L2.5 9 L3.5 8 L2.5 6.5 Q4 6 5.5 7 Z M5 8.5 L8 12.5" fill="#9b6fd8" stroke="#9b6fd8" stroke-width="0.9"/></svg>
<div class="a" style="left:113px;top:837px;width:12px;height:12px;border-radius:6px;background:#f0616d"></div>
<svg style="left:116px;top:840px" width="6" height="6" viewBox="0 0 6 6"><path d="M0.3 0.3 L5.7 5.7 M5.7 0.3 L0.3 5.7" stroke="#1f1f1f" stroke-width="1.4"/></svg>
<div class="t" style="left:129px;top:835px">0</div>
<svg style="left:159px;top:837px" width="12" height="11" viewBox="0 0 12 11"><path d="M6 0.3 L11.7 10.7 H0.3 Z" fill="#f5d67a"/><path d="M6 3.5 V7.2 M6 8.3 V9.6" stroke="#1f1f1f" stroke-width="1.4"/></svg>
<div class="t" style="left:175px;top:835px">2</div>
<svg style="left:213px;top:837px" width="10" height="12" viewBox="0 0 10 12"><path d="M5 11.5 V1 M1 5 L5 1 L9 5" fill="none" stroke="#bdbdbd" stroke-width="1.2"/></svg>
<svg style="left:242px;top:837px" width="10" height="12" viewBox="0 0 10 12"><path d="M5 0.5 V11 M1 7 L5 11 L9 7" fill="none" stroke="#bdbdbd" stroke-width="1.2"/></svg>
<div class="a" style="left:268px;top:836px;width:1px;height:14px;background:#c8c8c8"></div>
<svg style="left:282px;top:835px" width="15" height="15" viewBox="0 0 15 15"><path d="M13.5 1 L8 7" stroke="#d8d8d8" stroke-width="1.6"/><path d="M4.5 7 L8.5 11 L6 13.5 L2 9.5 Z" fill="#e8c77d"/><path d="M6.5 5.5 L9.8 8.8" stroke="#d8d8d8" stroke-width="1.6"/><path d="M2 1 V4 M0.5 2.5 H3.5" stroke="#55aaff" stroke-width="1"/></svg>
<svg style="left:300px;top:841px" width="7" height="4" viewBox="0 0 7 4"><path d="M0 0 H6 L3 3.5 Z" fill="#e0e0e0"/></svg>
<svg style="left:337px;top:838px" width="6" height="9" viewBox="0 0 6 9"><path d="M5.5 0 V9 L0 4.5 Z" fill="#8a8a8a"/></svg>
<svg style="left:1368px;top:838px" width="6" height="9" viewBox="0 0 6 9"><path d="M0 0 V9 L5.5 4.5 Z" fill="#8a8a8a"/></svg>
<div class="t" style="left:1402px;top:835px;font-size:11.5px;letter-spacing:-0.33px">Ln: 56</div>
<div class="t" style="left:1450px;top:835px;font-size:11.5px;letter-spacing:-0.40px">Ch: 71</div>
<div class="a" style="left:1491px;top:835px;width:39px;height:16px;background:#303030;border:1px solid #3a3a3a"></div>
<div class="t" style="left:1500.5px;top:835px;font-size:11.5px;letter-spacing:-0.7px">SPC</div>
<div class="a" style="left:1530px;top:835px;width:45px;height:16px;background:#303030;border:1px solid #3a3a3a"></div>
<div class="t" style="left:1540px;top:835px;font-size:11.5px;letter-spacing:-0.75px">CRLF</div>
<!-- ===== console window ===== -->
<div class="a" id="console" style="left:763px;top:209px;width:783px;height:512px;background:#2b2b2b;border:1px solid #3f3f3f"></div>
<div class="a" style="left:764px;top:240px;width:764px;height:479px;background:#0037da"></div>
<div class="a" style="left:1528px;top:240px;width:17px;height:479px;background:#171717"></div>
<div class="a" style="left:1529px;top:257px;width:15px;height:17px;background:#4d4d4d"></div>
<svg style="left:1532px;top:246px" width="9" height="6" viewBox="0 0 9 6"><path d="M0.5 5.5 L4.5 1 L8.5 5.5" fill="none" stroke="#9a9a9a" stroke-width="1.3"/></svg>
<svg style="left:1532px;top:708px" width="9" height="6" viewBox="0 0 9 6"><path d="M0.5 0.5 L4.5 5 L8.5 0.5" fill="none" stroke="#9a9a9a" stroke-width="1.3"/></svg>
<div class="a" style="left:772px;top:218px;width:16px;height:12px;background:#5b2d90;border:1px solid #8a8a8a"></div>
<div class="t mono" style="left:774px;top:216px;font-size:8px;font-weight:bold;color:#fff;letter-spacing:-0.6px">C:\</div>
<div class="t" style="left:793px;top:217px;color:#9d9d9d;letter-spacing:-0.075px">C:\Users\LEVIN ST\source\repos\ATM_Program-Advanced\x64\Debug\ATM_Program-Advanced.exe</div>
<div class="a" style="left:1426px;top:224px;width:10px;height:1px;background:#a0a0a0"></div>
<div class="a" style="left:1471px;top:219px;width:10px;height:10px;border:1px solid #a0a0a0"></div>
<svg style="left:1517px;top:219px" width="11" height="11" viewBox="0 0 11 11"><path d="M0.5 0.5 L10.5 10.5 M10.5 0.5 L0.5 10.5" stroke="#a0a0a0" stroke-width="1.1"/></svg>
<pre class="a mono" style="white-space:pre;left:764px;top:241px;font-size:14.2px;letter-spacing:-0.52px;line-height:16px;color:#cccccc;margin:0">                         ----------------------------


                         -    WELCOME BRI TO ATM    -


                         ----------------------------



                           Please INSERT your Card
                         [Press ENTER to insert card]</pre>
<!-- ===== Diagnostic Tools panel ===== -->
<div class="a" id="diag" style="left:1582px;top:97px;width:307px;height:755px;background:#1f1f1f;border:1px solid #3d3d3d"></div>
<div class="t" style="left:1587px;top:101px;color:#c4c4c4;letter-spacing:-0.12px">Diagnostic Tools</div>
<svg style="left:1840px;top:106px" width="8" height="5" viewBox="0 0 8 5"><path d="M0 0 H8 L4 4.5 Z" fill="#e0e0e0"/></svg>
<svg style="left:1856px;top:102px" width="9" height="12" viewBox="0 0 9 12"><path d="M2.5 0.5 H6.5 V6 M2.5 0.5 V6 M5.5 0.5 V6 M0.5 6.5 H8.5 M4.5 6.5 V11.5" fill="none" stroke="#e6e6e6" stroke-width="1.1"/></svg>
<svg style="left:1872px;top:103px" width="10" height="10" viewBox="0 0 10 10"><path d="M0.5 0.5 L9.5 9.5 M9.5 0.5 L0.5 9.5" stroke="#e6e6e6" stroke-width="1.3"/></svg>
<!-- toolbar -->
<svg style="left:1594px;top:126px" width="15" height="15" viewBox="0 0 15 15"><circle cx="7.5" cy="7.5" r="3.7" fill="none" stroke="#e0e0e0" stroke-width="2.2"/><path d="M7.5 0 V3 M7.5 12 V15 M0 7.5 H3 M12 7.5 H15 M2.2 2.2 L4.3 4.3 M10.7 10.7 L12.8 12.8 M12.8 2.2 L10.7 4.3 M4.3 10.7 L2.2 12.8" stroke="#e0e0e0" stroke-width="2.4"/></svg>
<div class="a" style="left:1621px;top:125px;width:1px;height:16px;background:#3d3d3d"></div>
<svg style="left:1630px;top:126px" width="15" height="14" viewBox="0 0 15 14"><path d="M9 3.5 V0.6 H0.6 V13.4 H9 V10.5" fill="none" stroke="#d8d8d8" stroke-width="1.1"/><path d="M4 7 H13.5 M10 3.3 L13.7 7 L10 10.7" fill="none" stroke="#55aaff" stroke-width="1.5"/></svg>
<div class="a" style="left:1657px;top:125px;width:1px;height:16px;background:#3d3d3d"></div>
<svg style="left:1666px;top:126px" width="14" height="14" viewBox="0 0 14 14"><circle cx="5.3" cy="5.3" r="4.4" fill="none" stroke="#d8d8d8" stroke-width="1.1"/><path d="M8.5 8.5 L13 13" stroke="#d8d8d8" stroke-width="1.8"/><path d="M5.3 2.8 V7.8 M2.8 5.3 H7.8" stroke="#55aaff" stroke-width="1.2"/></svg>
<svg style="left:1694px;top:126px" width="14" height="14" viewBox="0 0 14 14"><circle cx="5.3" cy="5.3" r="4.4" fill="none" stroke="#d8d8d8" stroke-width="1.1"/><path d="M8.5 8.5 L13 13" stroke="#d8d8d8" stroke-width="1.8"/><path d="M2.8 5.3 H7.8" stroke="#55aaff" stroke-width="1.2"/></svg>
<svg style="left:1720px;top:126px" width="14" height="15" viewBox="0 0 14 15"><path d="M2.5 8 V14 M5.5 10 V14 M8.5 6 V14 M11.5 9 V14" stroke="#8a8a8a" stroke-width="1.8"/><path d="M0.8 2.2 Q1.3 0.6 3 0.6 Q5 0.8 4.6 2.6 Q4.2 3.6 3 4 V5" fill="none" stroke="#8a8a8a" stroke-width="1.1"/></svg>
<div class="t" style="left:1593px;top:150px;font-weight:bold;font-size:11.6px;color:#fff;letter-spacing:-0.42px">Diagnostics session: 16 seconds</div>
<!-- ruler -->
<div class="a" style="left:1583px;top:168px;width:305px;height:1px;background:#3d3d3d"></div>
<div class="a" style="left:1583px;top:191px;width:305px;height:1px;background:#3d3d3d"></div>
<div class="a" style="left:1615px;top:169px;width:5px;height:22px;background:#f2f2f2"></div>
<div class="a" style="left:1851px;top:169px;width:5px;height:22px;background:#f2f2f2"></div>
<div class="a" style="left:1746px;top:169px;width:1px;height:22px;background:#4a4a4a"></div>
<div class="a" style="left:1645px;top:187px;width:1px;height:4px;background:#4a4a4a"></div>
<div class="a" style="left:1671px;top:187px;width:1px;height:4px;background:#4a4a4a"></div>
<div class="a" style="left:1696px;top:187px;width:1px;height:4px;background:#4a4a4a"></div>
<div class="a" style="left:1721px;top:187px;width:1px;height:4px;background:#4a4a4a"></div>
<div class="a" style="left:1772px;top:187px;width:1px;height:4px;background:#4a4a4a"></div>
<div class="a" style="left:1797px;top:187px;width:1px;height:4px;background:#4a4a4a"></div>
<div class="a" style="left:1822px;top:187px;width:1px;height:4px;background:#4a4a4a"></div>
<div class="a" style="left:1847px;top:187px;width:1px;height:4px;background:#4a4a4a"></div>
<div class="t" style="left:1750px;top:167px;font-size:11.5px;letter-spacing:-0.62px">10s</div>
<!-- events swimlane -->
<svg style="left:1589px;top:198px" width="8" height="8" viewBox="0 0 8 8"><path d="M7.5 0.5 V7.5 H0.5 Z" fill="#b0b0b0"/></svg>
<div class="t" style="left:1600px;top:195px;font-weight:bold;font-size:11.6px;color:#fff;letter-spacing:-0.54px">Events</div>
<div class="a" style="left:1602px;top:221px;width:3px;height:8px;background:#e0e0e0"></div>
<div class="a" style="left:1607px;top:221px;width:3px;height:8px;background:#e0e0e0"></div>
<div class="a" style="left:1619px;top:212px;width:233px;height:23px;border:1px solid #4a4a4a"></div>
<div class="a" style="left:1746px;top:213px;width:1px;height:21px;background:#3d3d3d"></div>
<!-- process memory -->
<svg style="left:1589px;top:243px" width="8" height="8" viewBox="0 0 8 8"><path d="M7.5 0.5 V7.5 H0.5 Z" fill="#b0b0b0"/></svg>
<div class="t" style="left:1600px;top:240px;font-weight:bold;font-size:11.6px;color:#fff;letter-spacing:-0.24px">Process Memory (KB)</div>
<svg style="left:1736px;top:241px" width="12" height="11" viewBox="0 0 12 11"><path d="M0 0 H12 L6 10.5 Z" fill="#3a9bf0"/></svg>
<div class="t" style="left:1750px;top:240px">S...</div>
<div class="a" style="left:1777px;top:241px;width:12px;height:12px;border-radius:6px;background:#7ab0cc"></div>
<div class="t" style="left:1791px;top:240px">Pri...</div>
<div class="t" style="left:1594px;top:260px">955</div>
<div class="t" style="left:1857px;top:260px">955</div>
<div class="t" style="left:1607px;top:313px">0</div>
<div class="t" style="left:1857px;top:313px">0</div>
<div class="a" style="left:1619px;top:259px;width:233px;height:70px;border:1px solid #4a4a4a"></div>
<div class="a" style="left:1662px;top:265px;width:153px;height:63px;background:#5b7c8e;border-top:1px solid #6a93a8"></div>
<div class="a" style="left:1746px;top:260px;width:1px;height:5px;background:#3d3d3d"></div><div class="a" style="left:1746px;top:265px;width:1px;height:63px;background:#6d8fa1"></div>
<!-- CPU -->
<svg style="left:1589px;top:335px" width="8" height="8" viewBox="0 0 8 8"><path d="M7.5 0.5 V7.5 H0.5 Z" fill="#b0b0b0"/></svg>
<div class="t" style="left:1600px;top:332px;font-weight:bold;font-size:11.6px;color:#fff;letter-spacing:-0.24px">CPU (% of all processors)</div>
<div class="t" style="left:1594px;top:350px">100</div>
<div class="t" style="left:1857px;top:350px">100</div>
<div class="t" style="left:1607px;top:404px">0</div>
<div class="t" style="left:1857px;top:404px">0</div>
<div class="a" style="left:1619px;top:349px;width:233px;height:70px;border:1px solid #4a4a4a"></div>
<div class="a" style="left:1746px;top:350px;width:1px;height:68px;background:#3d3d3d"></div>
<div class="a" style="left:1661px;top:417px;width:165px;height:1px;background:#4f6b7a"></div>
<!-- splitter + tabs -->
<div class="a" style="left:1583px;top:440px;width:305px;height:3px;background:#3d3d3d"></div>
<div class="a" style="left:1587px;top:447px;width:63px;height:19px;border:1px solid #c8c8c8;border-bottom:none"></div>
<div class="t" style="left:1593px;top:449px;color:#fff;letter-spacing:-0.05px">Summary</div>
<div class="a" style="left:1650px;top:448px;width:208px;height:18px;border:1px solid #3d3d3d;border-left:none"></div>
<div class="a" style="left:1695px;top:448px;width:1px;height:18px;background:#3d3d3d"></div>
<div class="a" style="left:1788px;top:448px;width:1px;height:18px;background:#3d3d3d"></div>
<div class="t" style="left:1656px;top:449px;color:#c8c8c8;letter-spacing:-0.53px">Events</div>
<div class="t" style="left:1702px;top:449px;color:#c8c8c8;letter-spacing:-0.15px">Memory Usage</div>
<div class="t" style="left:1794px;top:449px;color:#c8c8c8;letter-spacing:-0.63px">CPU Usage</div>
<div class="a" style="left:1583px;top:465px;width:305px;height:2px;background:#8a8a8a"></div>
<!-- summary content -->
<div class="t" style="left:1592px;top:472px;font-weight:bold;font-size:11.6px;color:#fff;letter-spacing:-0.54px">Events</div>
<div class="a" style="left:1583px;top:490px;width:305px;height:1px;background:#3d3d3d"></div>
<svg style="left:1598px;top:502px" width="14" height="7" viewBox="0 0 14 7"><path d="M3 0.8 L0.8 3.5 L3 6.2 M4.5 0.8 L6.7 3.5 L4.5 6.2 M8 0.8 L10.2 3.5 L8 6.2 M11 0.8 L13.2 3.5 L11 6.2" fill="none" stroke="#a8a8a8" stroke-width="1"/></svg>
<div class="t" style="left:1619px;top:498px;letter-spacing:-0.23px">Show Events (0 of 0)</div>
<div class="a" style="left:1583px;top:519px;width:305px;height:1px;background:#3d3d3d"></div>
<div class="t" style="left:1592px;top:524px;font-weight:bold;font-size:11.6px;color:#fff;letter-spacing:0.03px">Memory Usage</div>
<div class="a" style="left:1583px;top:542px;width:305px;height:1px;background:#3d3d3d"></div>
<svg style="left:1598px;top:552px" width="13" height="10" viewBox="0 0 13 10"><path d="M0.5 2 H3.5 L4.5 0.5 H8.5 L9.5 2 H12.5 V9.5 H0.5 Z" fill="#8a8a8a"/><circle cx="6.5" cy="5.6" r="2.3" fill="#1f1f1f"/><circle cx="6.5" cy="5.6" r="1.1" fill="#8a8a8a"/></svg>
<div class="t" style="left:1619px;top:550px;color:#666;letter-spacing:-0.28px">Take Snapshot</div>
<svg style="left:1598px;top:579px" width="13" height="12" viewBox="0 0 13 12"><rect x="1.5" y="2.5" width="10" height="7" fill="none" stroke="#c0c0c0" stroke-width="1.1"/><path d="M3.5 5 H9.5 M3.5 7 H9.5 M3 0.5 V2 M5.5 0.5 V2 M8 0.5 V2 M10.5 0.5 V2 M3 10 V11.5 M5.5 10 V11.5 M8 10 V11.5 M10.5 10 V11.5" stroke="#c0c0c0" stroke-width="1"/></svg>
<div class="t" style="left:1619px;top:578px;letter-spacing:-0.04px">Enable heap profiling (affects performance)</div>
<div class="a" style="left:1583px;top:599px;width:305px;height:1px;background:#3d3d3d"></div>
<div class="t" style="left:1592px;top:604px;font-weight:bold;font-size:11.6px;color:#fff;letter-spacing:-0.36px">CPU Usage</div>
<div class="a" style="left:1583px;top:622px;width:305px;height:1px;background:#3d3d3d"></div>
<div class="a" style="left:1600px;top:633px;width:9px;height:9px;border-radius:5px;background:#c8c8c8"></div>
<div class="t" style="left:1619px;top:630px;letter-spacing:-0.31px">Record CPU Profile</div>
<!-- right vertical tab strip -->
<div class="a" style="left:1914px;top:97px;width:6px;height:90px;background:#333333"></div>
<div class="a" style="left:1914px;top:199px;width:6px;height:64px;background:#333333"></div>
<div class="t" style="left:1911px;top:98px;transform-origin:0 0;transform:rotate(90deg);color:#b8b8b8;letter-spacing:-0.2px">Solution Explorer</div>
<div class="t" style="left:1911px;top:200px;transform-origin:0 0;transform:rotate(90deg);color:#b8b8b8;letter-spacing:-0.3px">Git Changes</div>
<!-- ===== Autos panel ===== -->
<div class="a" id="autos" style="left:6px;top:858px;width:612px;height:172px;border:1px solid #3d3d3d;background:#1f1f1f"></div>
<div class="t" style="left:11px;top:862px;color:#c4c4c4;letter-spacing:0.06px">Autos</div>
<svg style="left:569px;top:867px" width="8" height="5" viewBox="0 0 8 5"><path d="M0 0 H8 L4 4.5 Z" fill="#e0e0e0"/></svg>
<svg style="left:585px;top:863px" width="9" height="12" viewBox="0 0 9 12"><path d="M2.5 0.5 H6.5 V6 M2.5 0.5 V6 M5.5 0.5 V6 M0.5 6.5 H8.5 M4.5 6.5 V11.5" fill="none" stroke="#e6e6e6" stroke-width="1.1"/></svg>
<svg style="left:601px;top:864px" width="10" height="10" viewBox="0 0 10 10"><path d="M0.5 0.5 L9.5 9.5 M9.5 0.5 L0.5 9.5" stroke="#e6e6e6" stroke-width="1.3"/></svg>
<div class="a" style="left:9px;top:882px;width:221px;height:21px;background:#333333;border:1px solid #434343"></div>
<div class="t" style="left:14px;top:885px;color:#d8d8d8;letter-spacing:-0.29px">Search (Ctrl+E)</div>
<svg style="left:202px;top:886px" width="13" height="13" viewBox="0 0 13 13"><circle cx="8" cy="4.8" r="3.6" fill="none" stroke="#d8d8d8" stroke-width="1.6"/><path d="M5.5 7.5 L1 12" stroke="#d8d8d8" stroke-width="1.9"/></svg>
<svg style="left:219px;top:891px" width="7" height="4" viewBox="0 0 7 4"><path d="M0 0 H6 L3 3.5 Z" fill="#e0e0e0"/></svg>
<svg style="left:240px;top:888px" width="14" height="10" viewBox="0 0 14 10"><path d="M13.5 5 H1 M5 1 L1 5 L5 9" fill="none" stroke="#4f4f4f" stroke-width="1.1"/></svg>
<svg style="left:263px;top:888px" width="14" height="10" viewBox="0 0 14 10"><path d="M0.5 5 H13 M9 1 L13 5 L9 9" fill="none" stroke="#4f4f4f" stroke-width="1.1"/></svg>
<div class="t" style="left:283px;top:886px;color:#666;letter-spacing:-0.34px">Search Depth:</div>
<div class="a" style="left:362px;top:883px;width:40px;height:20px;background:#333333;border:1px solid #3b3b3b"></div>
<svg style="left:391px;top:891px" width="7" height="4" viewBox="0 0 7 4"><path d="M0 0 H6 L3 3.5 Z" fill="#5a5a5a"/></svg>
<div class="a" style="left:7px;top:925px;width:593px;height:1px;background:#333333"></div>
<div class="a" style="left:15px;top:906px;width:1px;height:19px;background:#333333"></div>
<div class="a" style="left:210px;top:906px;width:1px;height:19px;background:#333333"></div>
<div class="a" style="left:502px;top:906px;width:1px;height:19px;background:#333333"></div>
<div class="t" style="left:21px;top:908px;color:#8c8c8c">Name</div>
<div class="t" style="left:216px;top:908px;color:#8c8c8c;letter-spacing:-0.10px">Value</div>
<div class="t" style="left:508px;top:908px;color:#8c8c8c;letter-spacing:-0.25px">Type</div>
<div class="a" style="left:600px;top:906px;width:17px;height:123px;background:#2f2f2f"></div>
<div class="a" style="left:604px;top:923px;width:9px;height:90px;background:#3e3e3e"></div>
<svg style="left:604px;top:912px" width="9" height="5" viewBox="0 0 9 5"><path d="M0 5 H9 L4.5 0 Z" fill="#8a8a8a"/></svg>
<svg style="left:604px;top:1018px" width="9" height="5" viewBox="0 0 9 5"><path d="M0 0 H9 L4.5 5 Z" fill="#8a8a8a"/></svg>
<div class="a" style="left:6px;top:1029px;width:43px;height:21px;border:1px solid #3d3d3d;border-top:1px solid #1f1f1f;background:#1f1f1f"></div>
<div class="t" style="left:12px;top:1031px;color:#fff;letter-spacing:0.06px">Autos</div>
<div class="t" style="left:55px;top:1031px;color:#c8c8c8;letter-spacing:-0.28px">Locals</div>
<div class="t" style="left:100px;top:1031px;color:#c8c8c8;letter-spacing:-0.18px">Watch 1</div>
<!-- ===== Error List panel ===== -->
<div class="a" id="errlist" style="left:624px;top:858px;width:1265px;height:172px;border:1px solid #3d3d3d;background:#1f1f1f"></div>
<div class="t" style="left:629px;top:862px;color:#c4c4c4;letter-spacing:-0.30px">Error List</div>
<svg style="left:1840px;top:867px" width="8" height="5" viewBox="0 0 8 5"><path d="M0 0 H8 L4 4.5 Z" fill="#e0e0e0"/></svg>
<svg style="left:1856px;top:863px" width="9" height="12" viewBox="0 0 9 12"><path d="M2.5 0.5 H6.5 V6 M2.5 0.5 V6 M5.5 0.5 V6 M0.5 6.5 H8.5 M4.5 6.5 V11.5" fill="none" stroke="#e6e6e6" stroke-width="1.1"/></svg>
<svg style="left:1872px;top:864px" width="10" height="10" viewBox="0 0 10 10"><path d="M0.5 0.5 L9.5 9.5 M9.5 0.5 L0.5 9.5" stroke="#e6e6e6" stroke-width="1.3"/></svg>
<div class="a" style="left:632px;top:882px;width:150px;height:21px;background:#333333;border:1px solid #434343"></div>
<div class="t" style="left:636px;top:886px;letter-spacing:-0.12px">Entire Solution</div>
<svg style="left:771px;top:891px" width="7" height="4" viewBox="0 0 7 4"><path d="M0 0 H6 L3 3.5 Z" fill="#e0e0e0"/></svg>
<div class="a" style="left:789px;top:884px;width:1px;height:18px;background:#3d3d3d"></div>
<div class="a" style="left:793px;top:882px;width:70px;height:22px;border:1px solid #7160e8;background:#222027"></div>
<div class="a" style="left:797px;top:886px;width:13px;height:13px;border-radius:7px;background:#f0616d"></div>
<svg style="left:800px;top:889px" width="7" height="7" viewBox="0 0 7 7"><path d="M0.5 0.5 L6.5 6.5 M6.5 0.5 L0.5 6.5" stroke="#1f1f1f" stroke-width="1.4"/></svg>
<div class="t" style="left:816px;top:885px;letter-spacing:-0.42px">0 Errors</div>
<div class="a" style="left:866px;top:884px;width:1px;height:18px;background:#3d3d3d"></div>
<svg style="left:874px;top:886px" width="14" height="13" viewBox="0 0 14 13"><path d="M7 0.3 L13.7 12.7 H0.3 Z" fill="#f5d67a"/><path d="M7 4.3 V8.6 M7 9.8 V11.4" stroke="#1f1f1f" stroke-width="1.5"/></svg>
<div class="t" style="left:894px;top:885px;color:#c8c8c8;letter-spacing:-0.09px">0 of 2 Warnings</div>
<div class="a" style="left:988px;top:884px;width:1px;height:18px;background:#3d3d3d"></div>
<div class="a" style="left:995px;top:886px;width:13px;height:13px;border-radius:7px;background:#3f9cf0"></div>
<div class="a" style="left:1001px;top:888.5px;width:1.6px;height:2px;background:#fff"></div>
<div class="a" style="left:1001px;top:891.5px;width:1.6px;height:5px;background:#fff"></div>
<div class="t" style="left:1015px;top:885px;color:#c8c8c8;letter-spacing:-0.24px">0 of 1 Message</div>
<div class="a" style="left:1104px;top:884px;width:1px;height:18px;background:#3d3d3d"></div>
<div class="a" style="left:1109px;top:882px;width:22px;height:22px;border:1px solid #7160e8;background:#222027"></div>
<svg style="left:1112px;top:885px" width="16" height="16" viewBox="0 0 16 16"><path d="M4.5 4.5 H14 L10.5 9 V14 L8.3 12.5 V9 Z" fill="none" stroke="#e0e0e0" stroke-width="1.1"/><circle cx="3.3" cy="3.3" r="2.6" fill="#e5434f"/></svg>
<div class="a" style="left:1135px;top:884px;width:1px;height:18px;background:#3d3d3d"></div>
<div class="a" style="left:1142px;top:882px;width:150px;height:21px;background:#333333;border:1px solid #434343"></div>
<div class="t" style="left:1146px;top:886px;letter-spacing:-0.12px">Build + IntelliSense</div>
<svg style="left:1281px;top:891px" width="7" height="4" viewBox="0 0 7 4"><path d="M0 0 H6 L3 3.5 Z" fill="#e0e0e0"/></svg>
<div class="a" style="left:1690px;top:882px;width:196px;height:21px;background:#333333;border:1px solid #434343"></div>
<div class="t" style="left:1695px;top:885px;color:#d8d8d8;letter-spacing:-0.35px">Search Error List</div>
<svg style="left:1858px;top:886px" width="13" height="13" viewBox="0 0 13 13"><circle cx="8" cy="4.8" r="3.6" fill="none" stroke="#d8d8d8" stroke-width="1.6"/><path d="M5.5 7.5 L1 12" stroke="#d8d8d8" stroke-width="1.9"/></svg>
<svg style="left:1876px;top:891px" width="7" height="4" viewBox="0 0 7 4"><path d="M0 0 H6 L3 3.5 Z" fill="#e0e0e0"/></svg>
<div class="a" style="left:627px;top:926px;width:1260px;height:1px;background:#3d3d3d"></div>
<div class="a" style="left:652px;top:907px;width:1px;height:19px;background:#333333"></div>
<div class="a" style="left:678px;top:907px;width:1px;height:19px;background:#333333"></div>
<div class="a" style="left:728px;top:907px;width:1px;height:19px;background:#333333"></div>
<div class="a" style="left:1478px;top:907px;width:1px;height:19px;background:#333333"></div>
<div class="a" style="left:1628px;top:907px;width:1px;height:19px;background:#333333"></div>
<div class="a" style="left:1778px;top:907px;width:1px;height:19px;background:#333333"></div>
<div class="a" style="left:1813px;top:907px;width:1px;height:19px;background:#333333"></div>
<div class="a" style="left:1863px;top:907px;width:1px;height:19px;background:#333333"></div>
<div class="a" style="left:1886px;top:907px;width:1px;height:19px;background:#333333"></div>
<svg style="left:668px;top:909px" width="6" height="6" viewBox="0 0 6 6"><path d="M0.5 0.5 H5.5 V5.5 M2 2.5 H3.5 V5" fill="none" stroke="#b0b0b0" stroke-width="1"/></svg>
<div class="t" style="left:682px;top:909px;color:#e0e0e0;letter-spacing:-0.25px">Code</div>
<div class="t" style="left:732px;top:909px;color:#e0e0e0;letter-spacing:-0.03px">Description</div>
<div class="t" style="left:1482px;top:909px;color:#e0e0e0;letter-spacing:-0.05px">Project</div>
<div class="t" style="left:1632px;top:909px;color:#e0e0e0;letter-spacing:-0.34px">File</div>
<div class="t" style="left:1782px;top:909px;color:#e0e0e0;letter-spacing:-0.17px">Line</div>
<div class="t" style="left:1817px;top:909px;color:#e0e0e0;letter-spacing:-0.24px">Details</div>
<div class="t" style="left:630px;top:1031px;color:#c8c8c8;letter-spacing:-0.30px">Call Stack</div>
<div class="t" style="left:693px;top:1031px;color:#c8c8c8;letter-spacing:-0.12px">Breakpoints</div>
<div class="t" style="left:767px;top:1031px;color:#c8c8c8;letter-spacing:-0.13px">Exception Settings</div>
<div class="t" style="left:876px;top:1031px;color:#c8c8c8;letter-spacing:0.19px">Command Window</div>
<div class="t" style="left:992px;top:1031px;color:#c8c8c8;letter-spacing:0.12px">Immediate Window</div>
<div class="t" style="left:1108px;top:1031px;color:#c8c8c8;letter-spacing:0.33px">Output</div>
<div class="a" style="left:1152px;top:1029px;width:58px;height:21px;border:1px solid #3d3d3d;border-top:1px solid #1f1f1f;background:#1f1f1f"></div>
<div class="t" style="left:1158px;top:1031px;color:#fff;letter-spacing:-0.30px">Error List</div>
<!-- ===== status bar ===== -->
<div class="a" id="status" style="left:0;top:1056px;width:1920px;height:24px;background:#8a1b2e"></div>
<div class="a" style="left:0;top:1078px;width:48px;height:2px;background:#4a1822"></div><div class="a" style="left:48px;top:1078px;width:287px;height:2px;background:#2b2b2b;border-top:1px solid #5a5a5a"></div>
<svg style="left:4px;top:1060px" width="17" height="17" viewBox="0 0 17 17"><path d="M0.8 0.8 H15.8 V12.4 H10.6 L8.3 15.2 L6 12.4 H0.8 Z" fill="#9a3042" stroke="#ffffff" stroke-width="1.4"/></svg>
<div class="t" style="left:28px;top:1060px;color:#fff;letter-spacing:-0.60px">Ready</div>
<svg style="left:1567px;top:1061px" width="11" height="14" viewBox="0 0 11 14"><path d="M5.5 14 V1 M1 5.5 L5.5 1 L10 5.5" fill="none" stroke="#fff" stroke-width="1.1"/></svg>
<div class="t" style="left:1587px;top:1060px;color:#fff">Add to Source Control</div>
<svg style="left:1711px;top:1066px" width="8" height="5" viewBox="0 0 8 5"><path d="M0 4.5 H8 L4 0 Z" fill="#fff"/></svg>
<svg style="left:1742px;top:1061px" width="14" height="14" viewBox="0 0 14 14"><path d="M0.6 0.6 H13.4 V3.5 H0.6 Z M2 3.5 V13.4 H12 V3.5" fill="none" stroke="#fff" stroke-width="1.1"/><path d="M5 6 V10.5 H9 V6 M7 6 V9" fill="none" stroke="#fff" stroke-width="1.1"/></svg>
<div class="t" style="left:1763px;top:1060px;color:#fff;letter-spacing:-0.24px">Select Repository</div>
<svg style="left:1858px;top:1066px" width="8" height="5" viewBox="0 0 8 5"><path d="M0 4.5 H8 L4 0 Z" fill="#fff"/></svg>
<svg style="left:1888px;top:1059px" width="14" height="15" viewBox="0 0 14 15"><path d="M2.5 11 V6 Q2.5 1.2 7 1.2 Q10 1.4 11 4 M0.8 11.2 H7 M4.8 13 Q5.5 14.3 7 14" fill="none" stroke="#fff" stroke-width="1.1"/></svg>
<div class="a" style="left:1896px;top:1064px;width:12px;height:12px;border-radius:6px;background:#f4a3b4"></div>
<div class="t" style="left:1899.5px;top:1062px;font-size:9.5px;color:#4a0d18;font-weight:bold">1</div>
</body></html>
